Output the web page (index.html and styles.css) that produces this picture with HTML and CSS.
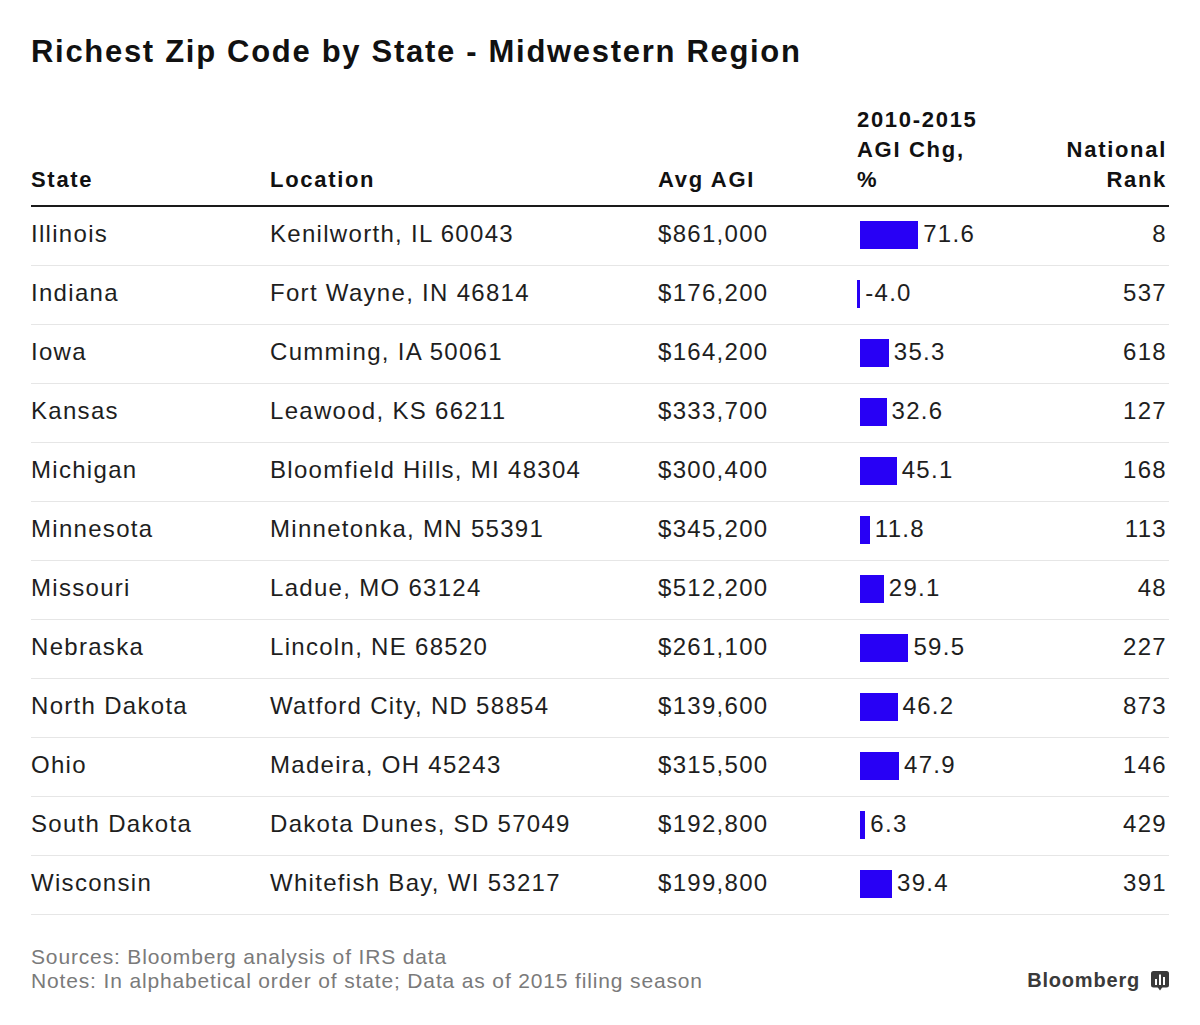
FILE: index.html
```html
<!DOCTYPE html>
<html lang="en">
<head>
<meta charset="utf-8">
<title>Richest Zip Code by State - Midwestern Region</title>
<link rel="stylesheet" href="styles.css">
</head>
<body>
<div class="page">
  <h1 class="title">Richest Zip Code by State - Midwestern Region</h1>
  <div class="table">
    <div class="row head">
      <div class="cell">State</div>
      <div class="cell">Location</div>
      <div class="cell">Avg AGI</div>
      <div class="cell">2010-2015<br>AGI Chg,<br>%</div>
      <div class="cell rank">National<br>Rank</div>
    </div>
    <div class="row"><div class="cell">Illinois</div><div class="cell">Kenilworth, IL 60043</div><div class="cell">$861,000</div><div class="cell chg"><span class="neg"></span><span class="bar" style="width:58px"></span><span class="val">71.6</span></div><div class="cell rank">8</div></div>
    <div class="row"><div class="cell">Indiana</div><div class="cell">Fort Wayne, IN 46814</div><div class="cell">$176,200</div><div class="cell chg"><span class="neg"><span class="bar" style="width:3px"></span></span><span class="val">-4.0</span></div><div class="cell rank">537</div></div>
    <div class="row"><div class="cell">Iowa</div><div class="cell">Cumming, IA 50061</div><div class="cell">$164,200</div><div class="cell chg"><span class="neg"></span><span class="bar" style="width:28.6px"></span><span class="val">35.3</span></div><div class="cell rank">618</div></div>
    <div class="row"><div class="cell">Kansas</div><div class="cell">Leawood, KS 66211</div><div class="cell">$333,700</div><div class="cell chg"><span class="neg"></span><span class="bar" style="width:26.4px"></span><span class="val">32.6</span></div><div class="cell rank">127</div></div>
    <div class="row"><div class="cell">Michigan</div><div class="cell">Bloomfield Hills, MI 48304</div><div class="cell">$300,400</div><div class="cell chg"><span class="neg"></span><span class="bar" style="width:36.5px"></span><span class="val">45.1</span></div><div class="cell rank">168</div></div>
    <div class="row"><div class="cell">Minnesota</div><div class="cell">Minnetonka, MN 55391</div><div class="cell">$345,200</div><div class="cell chg"><span class="neg"></span><span class="bar" style="width:9.6px"></span><span class="val">11.8</span></div><div class="cell rank">113</div></div>
    <div class="row"><div class="cell">Missouri</div><div class="cell">Ladue, MO 63124</div><div class="cell">$512,200</div><div class="cell chg"><span class="neg"></span><span class="bar" style="width:23.6px"></span><span class="val">29.1</span></div><div class="cell rank">48</div></div>
    <div class="row"><div class="cell">Nebraska</div><div class="cell">Lincoln, NE 68520</div><div class="cell">$261,100</div><div class="cell chg"><span class="neg"></span><span class="bar" style="width:48.2px"></span><span class="val">59.5</span></div><div class="cell rank">227</div></div>
    <div class="row"><div class="cell">North Dakota</div><div class="cell">Watford City, ND 58854</div><div class="cell">$139,600</div><div class="cell chg"><span class="neg"></span><span class="bar" style="width:37.4px"></span><span class="val">46.2</span></div><div class="cell rank">873</div></div>
    <div class="row"><div class="cell">Ohio</div><div class="cell">Madeira, OH 45243</div><div class="cell">$315,500</div><div class="cell chg"><span class="neg"></span><span class="bar" style="width:38.8px"></span><span class="val">47.9</span></div><div class="cell rank">146</div></div>
    <div class="row"><div class="cell">South Dakota</div><div class="cell">Dakota Dunes, SD 57049</div><div class="cell">$192,800</div><div class="cell chg"><span class="neg"></span><span class="bar" style="width:5.1px"></span><span class="val">6.3</span></div><div class="cell rank">429</div></div>
    <div class="row"><div class="cell">Wisconsin</div><div class="cell">Whitefish Bay, WI 53217</div><div class="cell">$199,800</div><div class="cell chg"><span class="neg"></span><span class="bar" style="width:31.9px"></span><span class="val">39.4</span></div><div class="cell rank">391</div></div>
  </div>
  <div class="footer">
    <div class="notes">
      <div>Sources: Bloomberg analysis of IRS data</div>
      <div>Notes: In alphabetical order of state; Data as of 2015 filing season</div>
    </div>
    <div class="logo">
      <span class="logo-text">Bloomberg</span>
      <svg class="logo-icon" width="18" height="20" viewBox="0 0 18 20" aria-hidden="true">
        <rect x="0" y="0" width="18" height="16.5" rx="2.5" fill="#3a3a3a"/>
        <polygon points="6.5,16 11.5,16 9,19.5" fill="#3a3a3a"/>
        <rect x="4" y="8" width="2" height="6" fill="#fff"/>
        <rect x="8" y="3.5" width="2" height="10.5" fill="#fff"/>
        <rect x="12" y="6" width="2" height="8" fill="#fff"/>
      </svg>
    </div>
  </div>
</div>
</body>
</html>
```

FILE: styles.css
```css
html, body {
  margin: 0;
  padding: 0;
  background: #ffffff;
}

body {
  font-family: "Liberation Sans", Arial, Helvetica, sans-serif;
  color: #1e1e1e;
}

.page {
  padding: 34px 31px 0 31px;
}

.title {
  margin: 0;
  font-size: 31px;
  line-height: 36px;
  font-weight: 700;
  letter-spacing: 1.7px;
  color: #111111;
}

.table {
  margin-top: 35px;
}

.row {
  display: grid;
  grid-template-columns: 239px 388px 199px 1fr 160px;
  border-bottom: 1px solid #e6e6e6;
  font-size: 24px;
  line-height: 53px;
  letter-spacing: 1.3px;
  padding-bottom: 5px;
}

.row.head {
  font-size: 22px;
  line-height: 30px;
  font-weight: 700;
  letter-spacing: 1.7px;
  color: #111111;
  padding-bottom: 10px;
  border-bottom: 2px solid #1a1a1a;
}

.row.head .cell {
  align-self: end;
}

.cell {
  white-space: nowrap;
}

.rank {
  text-align: right;
  padding-right: 2px;
}

.chg {
  display: flex;
  align-items: flex-start;
}

.neg {
  width: 3.2px;
  height: 53px;
  display: flex;
  justify-content: flex-end;
  align-items: flex-start;
  flex: none;
}

.bar {
  display: block;
  flex: none;
  height: 28px;
  margin-top: 14px;
  background: #2800f5;
}

.val {
  margin-left: 5px;
}

.footer {
  margin-top: 30px;
  display: flex;
  justify-content: space-between;
  align-items: flex-end;
}

.notes {
  font-size: 21px;
  line-height: 24px;
  letter-spacing: 0.85px;
  color: #7a7a7a;
}

.logo {
  display: flex;
  align-items: center;
  gap: 11px;
  margin-bottom: 1px;
}

.logo-text {
  font-size: 20px;
  font-weight: 700;
  letter-spacing: 0.8px;
  color: #3a3a3a;
  line-height: 24px;
}

.logo-icon {
  display: block;
  margin-top: 2px;
}
```
